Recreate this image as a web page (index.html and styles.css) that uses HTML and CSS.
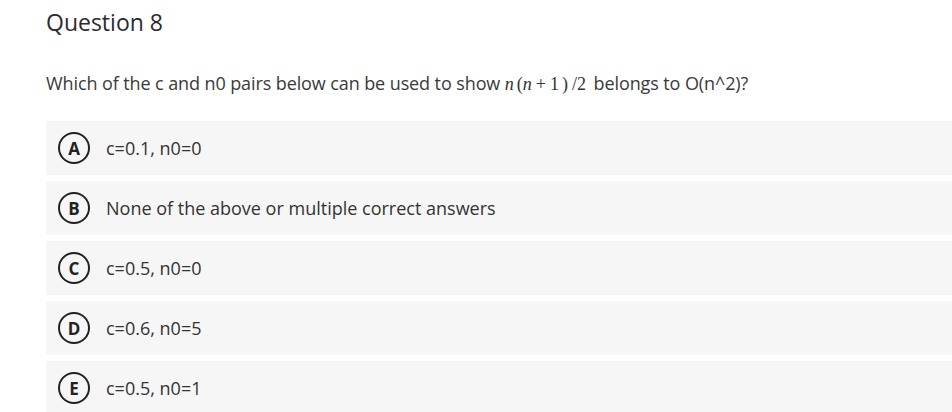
FILE: index.html
```html
<!DOCTYPE html>
<html>
<head>
<meta charset="utf-8">
<link rel="stylesheet" href="styles.css">
</head>
<body>
<div class="quiz">
  <h2 class="title">Question 8</h2>
  <p class="question">Which of the c and n0 pairs below can be used to show <span class="math"><i>n</i><span class="p">(</span><i>n</i><span class="op">+</span>1<span class="p">)</span><span class="sl">/</span>2</span> belongs to O(n^2)?</p>
  <ul class="options">
    <li class="option"><span class="badge">A</span><span class="label">c=0.1, n0=0</span></li>
    <li class="option"><span class="badge">B</span><span class="label">None of the above or multiple correct answers</span></li>
    <li class="option"><span class="badge">C</span><span class="label">c=0.5, n0=0</span></li>
    <li class="option"><span class="badge">D</span><span class="label">c=0.6, n0=5</span></li>
    <li class="option"><span class="badge">E</span><span class="label">c=0.5, n0=1</span></li>
  </ul>
</div>
</body>
</html>
```
FILE: styles.css
```css
html, body {
  margin: 0;
  padding: 0;
  background: #fff;
}
body {
  font-family: "Open Sans", "Noto Sans", sans-serif;
  color: #333;
  overflow: hidden;
}
.quiz {
  padding-left: 46px;
}
.title {
  margin: 6px 0 0;
  font-size: 23px;
  line-height: 32px;
  font-weight: 400;
  color: #2b2b2b;
}
.question {
  margin: 33px 0 0;
  font-size: 18px;
  line-height: 24px;
  color: #3a3a3a;
  letter-spacing: -0.1px;
}
.math {
  font-family: "Liberation Serif", "DejaVu Serif", serif;
  font-size: 18px;
  color: #333;
  margin-right: 3px;
  letter-spacing: 0;
}
.math i {
  font-style: italic;
}
.math .p {
  margin: 0 0 0 3px;
}
.math .op {
  margin: 0 4px;
}
.math .sl {
  margin: 0 0 0 4px;
}
.options {
  list-style: none;
  margin: 25px 0 0;
  padding: 0;
  display: flex;
  flex-direction: column;
  gap: 6px;
}
.option {
  height: 54px;
  background: #f6f6f6;
  display: flex;
  align-items: center;
  padding-left: 12px;
}
.badge {
  width: 28px;
  height: 28px;
  border: 2px solid #222;
  border-radius: 50%;
  display: flex;
  align-items: center;
  justify-content: center;
  font-size: 17px;
  font-weight: 700;
  color: #222;
  flex: none;
}
.label {
  margin-left: 16px;
  font-size: 18px;
  color: #333;
}
```
